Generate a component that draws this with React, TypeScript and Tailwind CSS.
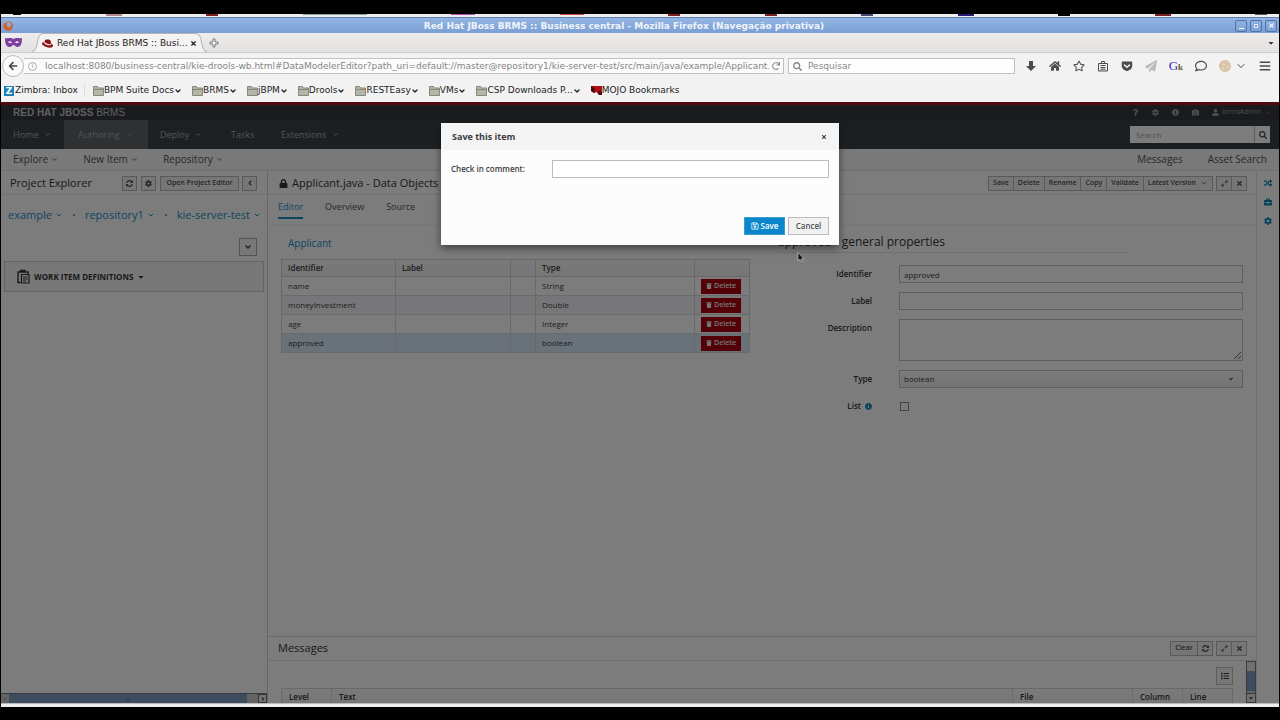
import React from 'react';
import {
  FaAngleDown, FaAngleLeft, FaArrowLeft, FaBriefcase, FaCamera, FaCaretDown, FaCog,
  FaExpandAlt, FaFirefox, FaGetPocket, FaHome, FaInfoCircle, FaList, FaLock,
  FaPaperPlane, FaQuestion, FaRandom, FaRedhat, FaRegComment, FaRegSave, FaRegStar,
  FaSearch, FaSyncAlt, FaTimes, FaTrash, FaUser, FaBars, FaRedo, FaCookie,
} from 'react-icons/fa';
import { ChevronDown } from 'lucide-react';

const bookmarks = ['BPM Suite Docs', 'BRMS', 'jBPM', 'Drools', 'RESTEasy', 'VMs', 'CSP Downloads P...'];

const fields = [
  { id: 'name', type: 'String' },
  { id: 'moneyInvestment', type: 'Double' },
  { id: 'age', type: 'Integer' },
  { id: 'approved', type: 'boolean' },
];

const smallBtn =
  'h-[15px] flex items-center justify-center border border-[#b2b2b2] bg-[#ececec] text-[7px] font-semibold text-[#4d4d4d]';

function TaskStrip() {
  return (
    <div className="h-[3px] shrink-0 bg-[#eeeeee] flex items-start justify-between px-3">
      <span className="w-2 h-px bg-black" />
      <span className="w-4 h-0.5 bg-[#b58a8d]" />
      <span className="w-3 h-0.5 bg-[#7a2020]" />
      <span className="w-16 h-px bg-[#8a9c9c]" />
      <span className="w-6 h-px bg-[#b04ab0]" />
      <span className="w-6 h-px bg-[#d24a4a]" />
      <span className="w-3 h-0.5 bg-[#7a2020]" />
      <span className="w-3 h-0.5 bg-[#7a2020]" />
      <span className="w-3 h-0.5 bg-[#444a70]" />
      <span className="w-4 h-0.5 bg-[#241a78]" />
      <span className="w-3 h-0.5 bg-black" />
      <span className="w-4 h-0.5 bg-[#7a2020]" />
      <span className="w-3 h-px bg-[#555555]" />
    </div>
  );
}

function BrowserChrome() {
  return (
    <header className="shrink-0 font-['DejaVu_Sans',sans-serif] text-[#3a3a3a]">
      <div className="h-4 flex items-center bg-linear-to-b from-[#93b5e3] to-[#7a9fd4] border-t border-[#5f7fae] px-0.5">
        <FaFirefox className="size-[10px] text-[#d0622b]" />
        <h1 className="flex-1 text-center text-[9px] leading-[14px] font-bold text-[#f0f4fa]">
          Red Hat JBoss BRMS :: Business central - Mozilla Firefox (Navegação privativa)
        </h1>
        <div className="flex gap-[3px]">
          <button aria-label="Minimize" className="size-3 flex items-end justify-center border border-[#4f73ab] rounded-xs pb-0.5"><span className="w-[5px] h-px bg-white" /></button>
          <button aria-label="Maximize" className="size-3 flex items-center justify-center border border-[#4f73ab] rounded-xs"><span className="size-1 border border-[#dbe7f8]" /></button>
          <button aria-label="Close" className="size-3 flex items-center justify-center border border-[#4f73ab] rounded-xs"><FaTimes className="size-[7px] text-[#e8f0fb]" /></button>
        </div>
      </div>

      <div className="h-5 flex items-end bg-linear-to-b from-[#eeecea] to-[#e4e2e0] border-b border-[#cfcdcb]">
        <svg viewBox="0 0 17 11" className="w-[17px] h-[11px] ml-1 self-center">
          <path d="M0 1C3 2 6 0 8.5 2C11 0 14 2 17 1C17 6 16 10 12.500 10C10.500 10 9.500 8 8.500 8C7.500 8 6.500 10 4.500 10C1 10 0 6 0 1Z" fill="#7b3fa0" />
          <path d="M3 5C4 4 6 4 7 5.500C6 6.500 4 6.500 3 5ZM14 5C13 4 11 4 10 5.500C11 6.500 13 6.500 14 5Z" fill="#eee6f4" />
        </svg>
        <svg viewBox="0 0 10 19" className="w-[10px] h-[19px] ml-[10px]"><path d="M0 19C7 19 4 1 10 1V19Z" fill="#f4f3f2" /><path d="M0 18.5C7 18.5 4 1 10 1" fill="none" stroke="#b5b3b1" /></svg>
        <div className="h-[19px] w-[155px] flex items-center bg-[#f4f3f2] border-t border-[#b5b3b1] pt-px text-[9px] text-[#222222]">
          <FaRedhat className="size-[11px] text-[#8f1116]" />
          <span className="ml-1 flex-1 whitespace-nowrap">Red Hat JBoss BRMS :: Busi...</span>
          <button aria-label="Close tab"><FaTimes className="size-[7px]" /></button>
        </div>
        <svg viewBox="0 0 10 19" className="w-[10px] h-[19px]"><path d="M10 19C3 19 6 1 0 1V19Z" fill="#f4f3f2" /><path d="M10 18.5C3 18.5 6 1 0 1" fill="none" stroke="#b5b3b1" /></svg>
        <button aria-label="New tab" className="self-center ml-0.5">
          <svg viewBox="0 0 10 10" className="size-[10px]"><path d="M4 1H6V4H9V6H6V9H4V6H1V4H4Z" fill="#fff" stroke="#777" /></svg>
        </button>
        <FaCaretDown className="size-2 ml-auto mr-1 self-center" />
      </div>

      <div className="h-[26px] flex items-center bg-[#f3f2f2] text-[9px] pr-2">
        <button aria-label="Back" className="size-[22px] rounded-full border border-[#bcbcbc] bg-[#fafafa] flex items-center justify-center ml-px shrink-0"><FaArrowLeft className="size-[10px] text-[#444444]" /></button>
        <div className="h-4 flex-1 min-w-0 flex items-center border border-l-0 border-[#c2c1c0] bg-[#fbfbfb]">
          <span className="size-[9px] shrink-0 rounded-full border border-[#aaaaaa] ml-1 mr-2 flex items-center justify-center text-[7px] text-[#999999]">i</span>
          <input
            aria-label="Address"
            className="flex-1 min-w-0 pt-0.5 text-[#858585] outline-none"
            defaultValue="localhost:8080/business-central/kie-drools-wb.html#DataModelerEditor?path_uri=default://master@repository1/kie-server-test/src/main/java/example/Applicant.j"
          />
          <button aria-label="Reload" className="w-3.5 shrink-0 flex justify-center"><FaRedo className="size-2 text-[#888888]" /></button>
        </div>
        <label className="h-4 ml-1 w-[227px] shrink-0 flex items-center gap-1.5 border border-[#c2c1c0] bg-[#fdfdfd] px-1">
          <FaSearch className="size-[9px] shrink-0 text-[#888888]" />
          <input placeholder="Pesquisar" aria-label="Pesquisar" className="w-full min-w-0 pt-0.5 placeholder:text-[#888888] outline-none" />
        </label>
        <div className="flex items-center justify-between w-[246px] ml-[10px] shrink-0 text-[#4c4c4c] [&_svg]:size-3">
          <svg viewBox="0 0 12 12"><path d="M4 1H8V6H11L6 11L1 6H4Z" fill="currentColor" /></svg>
          <FaHome /><FaRegStar />
          <svg viewBox="0 0 12 12" fill="none" stroke="currentColor"><path d="M1.5 3.5H10.5V11H1.5ZM4.5 3.5V1.5H7.5V3.5M3.5 5.5H8.5M3.5 7.5H8.5M3.5 9.2H8.5" /></svg>
          <FaGetPocket />
          <FaPaperPlane className="text-[#bbbbbb]" />
          <span className="font-['Liberation_Serif',serif] text-[13px] leading-3 text-[#2a2ac0]">G<b className="text-[9px] text-[#6a5a20]">k</b></span>
          <FaRegComment /><span className="flex items-center gap-1"><FaCookie className="text-[#d9c4a8]" /><ChevronDown /></span><FaBars />
        </div>
      </div>

      <nav className="h-[23px] flex items-center bg-[#f3f2f2] text-[9px] text-[#222222] whitespace-nowrap pl-[3px]">
        <a href="#zimbra" className="flex items-center gap-px pr-1.5 mr-2 border-r border-[#dddddd]">
          <span className="size-[10px] bg-[#1b83bb] text-white font-bold text-[9px] leading-[10px] text-center">Z</span>
          Zimbra: Inbox
        </a>
        {bookmarks.map((name) => (
          <a href="#folder" key={name} className="flex items-center mr-[10px]">
            <svg viewBox="0 0 11 10" className="w-[11px] h-[10px]"><path d="M0.5 9.5V0.5H4.5L5.5 2H10.5V9.5ZM0.5 3.5H10.5" fill="#b4b7a8" stroke="#85887a" /></svg>
            {name}
            <ChevronDown strokeWidth={4} className="size-2" />
          </a>
        ))}
        <a href="#mojo" className="flex items-center">
          <svg viewBox="0 0 11 10" className="w-[11px] h-[10px]"><path d="M0 0H11V9H8L6 6L3 7L0 5Z" fill="#b01014" /><path d="M0 0L4 3L3 7L0 5ZM6 6L8 9H11V6L8 5Z" fill="#4a0a0c" /></svg>
          MOJO Bookmarks
        </a>
      </nav>
    </header>
  );
}

function AppHeader() {
  return (
    <>
      <div className="h-[18px] shrink-0 flex items-center justify-between border-t-[3px] border-[#a01420] bg-[#32363f] pl-3 pr-2">
        <div className="text-[10px] leading-[14px] text-[#c0c0c0] font-['Liberation_Sans',sans-serif]">
          <b>RED HAT JBOSS</b> BRMS
        </div>
        <div className="flex items-center gap-[13px] text-[7px] text-[#9a9da2]">
          <FaQuestion /><FaCog /><FaInfoCircle /><FaCamera />
          <span className="flex items-center gap-1"><FaUser /> brmsAdmin <ChevronDown className="size-1.5" /></span>
        </div>
      </div>
      <nav className="h-[29px] shrink-0 flex items-center bg-linear-to-r from-[#3a4248] to-[#383e44] text-[9px] text-[#a4a8ac]">
        <a href="#home" className="flex items-center gap-1.5 pl-3 w-[63px]">Home <ChevronDown strokeWidth={3} className="size-[7px]" /></a>
        <a href="#authoring" className="flex items-center gap-1.5 pl-3.5 w-[84px] h-full bg-[#5c6065]">Authoring <ChevronDown strokeWidth={3} className="size-[7px]" /></a>
        <a href="#deploy" className="flex items-center gap-1.5 pl-3 w-[71px]">Deploy <ChevronDown strokeWidth={3} className="size-[7px]" /></a>
        <a href="#tasks" className="w-[50px] pl-3">Tasks</a>
        <a href="#extensions" className="flex items-center gap-1.5 pl-3">Extensions <ChevronDown strokeWidth={3} className="size-[7px]" /></a>
        <div className="ml-auto mr-[9px] flex h-[17px] w-[140px] bg-[#fafafa]">
          <input placeholder="Search" aria-label="Search" className="flex-1 min-w-0 px-1.5 text-[8px] placeholder:text-[#a5a5a5] outline-none" />
          <button aria-label="Run search" className="w-4 flex items-center justify-center border-l border-[#bbbbbb]"><FaSearch className="size-2 text-[#444444]" /></button>
        </div>
      </nav>
      <nav className="h-[22px] shrink-0 flex items-center gap-[25px] bg-[#f3f3f4] border-b border-[#dcdcdc] pl-3 pr-3 text-[10px] text-[#4d5258]">
        <a href="#explore" className="flex items-center gap-[3px]">Explore <ChevronDown strokeWidth={3} className="size-[7px]" /></a>
        <a href="#new" className="flex items-center gap-[3px]">New Item <ChevronDown strokeWidth={3} className="size-[7px]" /></a>
        <a href="#repository" className="flex items-center gap-[3px]">Repository <ChevronDown strokeWidth={3} className="size-[7px]" /></a>
        <a href="#messages" className="ml-auto">Messages</a>
        <a href="#assets">Asset Search</a>
      </nav>
    </>
  );
}

function Sidebar() {
  return (
    <aside className="w-[267px] shrink-0 flex flex-col border-r border-[#cfcfcf]">
      <div className="h-6 flex items-center border-b border-[#e6e6e6] pl-[9px] pr-[10px] pt-px">
        <h2 className="text-[11px] mr-auto">Project Explorer</h2>
        <button aria-label="Refresh" className={`${smallBtn} w-[15px] mr-1`}><FaSyncAlt /></button>
        <button aria-label="Settings" className={`${smallBtn} w-[15px] mr-1`}><FaCog /></button>
        <button className={`${smallBtn} w-[79px] mr-[3px]`}>Open Project Editor</button>
        <button aria-label="Collapse" className={`${smallBtn} w-[15px]`}><FaAngleLeft className="size-2" /></button>
      </div>
      <div className="flex items-center justify-between h-10 pl-[7px] pr-1.5 text-[11px] text-[#1a8cc8]">
        <a href="#example" className="flex items-center gap-[3px]">example <ChevronDown strokeWidth={3} className="size-2" /></a>
        <span className="size-0.5 bg-[#999999]" />
        <a href="#repository1" className="flex items-center gap-[3px]">repository1 <ChevronDown strokeWidth={3} className="size-2" /></a>
        <span className="size-0.5 bg-[#999999]" />
        <a href="#kie" className="flex items-center gap-[3px]">kie-server-test <ChevronDown strokeWidth={3} className="size-2" /></a>
      </div>
      <div className="flex justify-end pr-[10px] pt-[3px]">
        <button aria-label="More" className="size-[18px] flex items-center justify-center border border-[#a6a6a6] bg-[#f0f0f0]"><ChevronDown strokeWidth={4} className="size-2" /></button>
      </div>
      <button className="mx-[3px] mt-[5px] h-[31px] flex items-center gap-1 border border-[#cacaca] bg-[#f0f0f0] pl-[12px] text-[8px] font-bold">
        <svg viewBox="0 0 13 15" className="w-[13px] h-[15px]" fill="none" stroke="currentColor">
          <path d="M3.5 13.5H1V3H3.5M3.5 3V1.5H8V3H11V5M3 3H9" strokeWidth="1.4" />
          <path d="M4.5 5.5H12V14H4.5ZM6 8H10.5M6 10H10.5M6 12H9" strokeWidth="1.2" />
        </svg>
        WORK ITEM DEFINITIONS <FaCaretDown className="size-2" />
      </button>
      <div className="mt-auto h-[10px] flex border-t border-[#777777] bg-[#c8c8c8]">
        <button aria-label="Scroll left" className="w-2 flex items-center justify-center text-[#999999]"><FaAngleLeft className="size-1.5" /></button>
        <div className="flex-1 mr-[11px] bg-[#7c99c0] flex items-center justify-center text-[#56708f]"><FaBars className="size-1 rotate-90" /></div>
        <button aria-label="Scroll right" className="w-[9px] flex items-center justify-center border border-[#666666] bg-[#e8e8e8]"><FaAngleLeft className="size-1.5 rotate-180" /></button>
      </div>
    </aside>
  );
}

function FieldsTable() {
  return (
    <table className="w-full table-fixed border-collapse border border-[#cfcfcf] text-[8px] leading-[10px] text-left text-[#3c3c3c]">
      <colgroup>
        <col className="w-[114px]" />
        <col className="w-[115px]" />
        <col className="w-[25px]" />
        <col className="w-[159px]" />
        <col className="w-[55px]" />
      </colgroup>
      <thead>
        <tr className="h-[17px] bg-linear-to-b from-[#f6f6f6] to-[#ebebeb] [&>th]:border [&>th]:border-[#cfcfcf] [&>th]:px-1.5 [&>th]:font-semibold">
          <th>Identifier</th>
          <th>Label</th>
          <th />
          <th>Type</th>
          <th />
        </tr>
      </thead>
      <tbody>
        {fields.map((f) => (
          <tr
            key={f.id}
            className="h-[19px] even:bg-[#efeff2] last:bg-[#d3e2f2] last:even:bg-[#d3e2f2] [&>td]:border [&>td]:border-[#d4d4d4] [&>td]:px-1.5"
          >
            <td>{f.id}</td>
            <td />
            <td />
            <td>{f.type}</td>
            <td>
              <button className="w-10 h-[15px] flex items-center justify-center gap-0.5 bg-[#a8000e] text-[7px] font-semibold text-[#e8e8e8]">
                <FaTrash className="size-1.5" /> Delete
              </button>
            </td>
          </tr>
        ))}
      </tbody>
    </table>
  );
}

function PropertiesForm() {
  const label = 'w-[94px] shrink-0 pt-1 text-right text-[8px] leading-[10px] font-semibold';
  const box = 'ml-[27px] flex-1 min-w-0 border border-[#bdbdbd] bg-transparent px-1 text-[8px] text-[#3c3c3c] outline-none';
  return (
    <form className="flex-1 min-w-0">
      <h3 className="text-[12px] leading-[18px] pb-px border-b border-[#dedede] w-3/4">approved - general properties</h3>
      <div className="mt-3 flex flex-col gap-[9px]">
        <div className="flex">
          <label htmlFor="identifier" className={label}>Identifier</label>
          <input id="identifier" defaultValue="approved" className={`${box} h-[18px]`} />
        </div>
        <div className="flex">
          <label htmlFor="label" className={label}>Label</label>
          <input id="label" className={`${box} h-[18px]`} />
        </div>
        <div className="flex">
          <label htmlFor="description" className={label}>Description</label>
          <textarea id="description" className={`${box} h-[42px]`} />
        </div>
        <div className="flex">
          <label htmlFor="type" className={label}>Type</label>
          <div className={`${box} h-[18px] flex items-center bg-linear-to-b from-[#f6f6f6] to-[#eaeaea]`}>
            <select id="type" className="appearance-none flex-1 outline-none">
              <option>boolean</option>
            </select>
            <FaAngleDown className="size-1.5 mr-1" />
          </div>
        </div>
        <div className="flex h-[18px]">
          <label htmlFor="list" className={`${label} flex justify-end gap-1`}>List <FaInfoCircle className="size-[7px] mt-0.5 text-[#0a88b0]" /></label>
          <input id="list" type="checkbox" className="appearance-none ml-7 mt-[5px] size-[9px] border border-[#858585] bg-[#f6f6f6]" />
        </div>
      </div>
    </form>
  );
}

function EditorPanel() {
  return (
    <section className="flex-1 flex flex-col min-h-0">
      <div className="h-6 flex items-center border-b border-[#e2e2e2] pl-[11px] pr-[9px] pt-px">
        <FaLock className="size-[9px]" />
        <h2 className="ml-1 text-[11px]">Applicant.java - Data Objects</h2>
        <FaCaretDown className="size-2 ml-1 mr-auto" />
        <div className="flex">
          {['Save', 'Delete', 'Rename', 'Copy', 'Validate'].map((t) => (
            <button key={t} className={`${smallBtn} px-1 -mr-px`}>{t}</button>
          ))}
          <button className={`${smallBtn} px-1 gap-1`}>Latest Version <ChevronDown className="size-2" /></button>
        </div>
        <PanelButtons />
      </div>
      <div className="h-[30px] flex gap-[22px] pl-[10px] pt-[5px] border-b border-[#efefef] text-[9px] text-[#4d5258]">
        <button className="h-[19px] pb-1 border-b-2 border-[#1a8cb8] text-[#1a8cc8]">Editor</button>
        <button className="h-[19px] pb-1.5">Overview</button>
        <button className="h-[19px] pb-1.5">Source</button>
      </div>
      <div className="flex gap-[29px] pt-2 pl-[13px] pr-[13px]">
        <div className="w-[468px] shrink-0">
          <a href="#applicant" className="block pl-[7px] pb-1.5 text-[10px] leading-5 text-[#1a8cc8]">Applicant</a>
          <FieldsTable />
        </div>
        <PropertiesForm />
      </div>
    </section>
  );
}

function PanelButtons() {
  return (
    <div className="flex ml-[3px]">
      <button aria-label="Maximize panel" className={`${smallBtn} w-4 -mr-px`}><FaExpandAlt /></button>
      <button aria-label="Close panel" className={`${smallBtn} w-4`}><FaTimes /></button>
    </div>
  );
}

function MessagesPanel() {
  return (
    <section className="h-[67px] shrink-0 flex flex-col border-t border-[#d6d6d6]">
      <div className="h-6 shrink-0 flex items-center border-b border-[#dedede] pl-[10px] pr-[9px]">
        <h2 className="text-[11px] mr-auto">Messages</h2>
        <button className={`${smallBtn} w-7 -mr-px`}>Clear</button>
        <button aria-label="Refresh messages" className={`${smallBtn} w-4`}><FaSyncAlt /></button>
        <PanelButtons />
      </div>
      <div className="flex-1 min-h-0 flex">
        <div className="flex-1 pl-[13px] pr-[13px] pt-1.5 overflow-hidden">
          <button aria-label="Columns" className="ml-auto h-[18px] w-[17px] flex items-center justify-center border border-[#bdbdbd] bg-[#f0f0f0]"><FaList className="size-2 text-[#333333]" /></button>
          <table className="mt-[3px] w-full table-fixed text-left text-[8px] border border-[#d0d0d0]">
            <thead>
              <tr className="h-4 bg-linear-to-b from-[#f6f6f6] to-[#ebebeb] [&>th]:font-semibold [&>th]:pl-[7px] [&>th]:border-l [&>th]:border-[#d8d8d8]">
                <th className="w-[50px]">Level</th>
                <th>Text</th>
                <th className="w-[120px]">File</th>
                <th className="w-[50px]">Column</th>
                <th className="w-[50px]">Line</th>
              </tr>
            </thead>
          </table>
        </div>
        <div className="w-[10px] flex flex-col border border-[#777777] bg-[#c8c8c8]">
          <span className="h-[9px] bg-[#e0e0e0]" />
          <span className="h-5 bg-[#7c99c0]" />
          <span className="mt-auto h-[9px] flex items-center justify-center bg-[#e0e0e0] border-t border-[#777777]"><FaCaretDown className="size-1.5" /></span>
        </div>
      </div>
    </section>
  );
}

function SaveDialog() {
  return (
    <div className="absolute inset-0 bg-black/50 flex justify-center items-start pt-[21px]">
      <div role="dialog" aria-labelledby="save-title" className="w-[398px] h-[122px] flex flex-col bg-[#fcfcfc] shadow-[0_3px_8px_rgba(0,0,0,0.5)] text-[#3c3c3c]">
        <div className="h-[27px] flex items-center justify-between bg-[#f4f4f5] pl-[11px] pr-3">
          <h2 id="save-title" className="text-[9px] font-bold">Save this item</h2>
          <button aria-label="Close"><FaTimes className="size-1.5" /></button>
        </div>
        <div className="flex items-center pl-[10px] pr-[10px] pt-[10px]">
          <label htmlFor="comment" className="w-[101px] text-[8px] font-semibold">Check in comment:</label>
          <input id="comment" className="flex-1 h-[18px] border border-[#bbbbbb] bg-white px-1 text-[8px] outline-none" />
        </div>
        <div className="mt-auto mb-[10px] mr-[10px] flex justify-end gap-[3px] text-[8px] font-semibold">
          <button className="w-[41px] h-[18px] flex items-center justify-center gap-0.5 border border-[#3d9ccc] bg-[#0a86cc] text-white"><FaRegSave className="size-2" /> Save</button>
          <button className="w-[41px] h-[18px] border border-[#bbbbbb] bg-[#f1f1f1] text-[#4d5258]">Cancel</button>
        </div>
      </div>
    </div>
  );
}

export default function App() {
  return (
    <div className="h-screen flex flex-col bg-black pt-[14px] pb-[13px] px-px overflow-hidden">
      <TaskStrip />
      <BrowserChrome />
      <main className="relative flex-1 min-h-0 flex flex-col bg-[#f8f8f8] font-['Open_Sans',sans-serif] text-[#333333]">
        <AppHeader />
        <div className="flex-1 min-h-0 flex">
          <Sidebar />
          <div className="flex-1 min-w-0 flex flex-col border-r border-[#dddddd]">
            <EditorPanel />
            <MessagesPanel />
          </div>
          <aside className="w-[22px] shrink-0 flex flex-col items-center gap-[11px] pt-2 text-[8px] text-[#0a84b4]">
            <FaRandom /><FaBriefcase /><FaCog />
          </aside>
        </div>
        <SaveDialog />
        <svg viewBox="0 0 8 11" className="absolute left-[796px] top-[150px] w-2 h-[11px]"><path d="M1 0.5V9L3 7.2L4.5 10L5.5 9.5L4.5 6.8H7Z" fill="#111" stroke="#ddd" strokeWidth="0.6" /></svg>
      </main>
      <div className="h-1 shrink-0 bg-[#ededed] border-t border-[#bbbbbb]" />
    </div>
  );
}
